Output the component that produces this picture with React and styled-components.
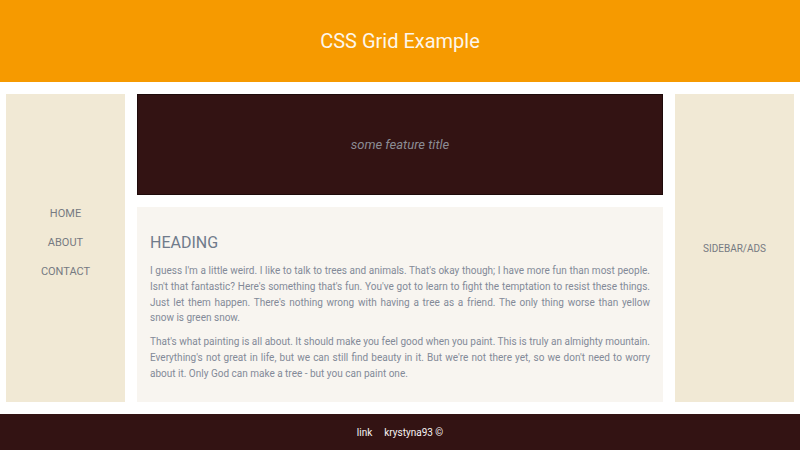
import React from 'react';
import styled, { createGlobalStyle } from 'styled-components';

const GlobalStyle = createGlobalStyle`
  html, body {
    margin: 0;
    padding: 0;
    background: #fff;
    font-family: Roboto, 'Liberation Sans', sans-serif;
  }
  * {
    box-sizing: border-box;
  }
`;

const Page = styled.div`
  display: grid;
  height: 450px;
  grid-template-columns: 119px 1fr 119px;
  grid-template-rows: 82px 101px 1fr 36px;
  grid-template-areas:
    'header header header'
    'nav feature ads'
    'nav main ads'
    'footer footer footer';
  column-gap: 12px;
  row-gap: 12px;
  padding: 0 6px;
`;

const Header = styled.header`
  grid-area: header;
  margin: 0 -6px;
  background: #f69a00;
  color: #fdf6ea;
  display: flex;
  align-items: center;
  justify-content: center;
`;

const Title = styled.h1`
  margin: 0;
  font-size: 20px;
  font-weight: 400;
`;

const Side = styled.aside`
  grid-area: ${(p) => p.area};
  background: #f1e9d5;
  display: flex;
  align-items: center;
  justify-content: center;
  color: #767a82;
  font-size: ${(p) => (p.area === 'ads' ? '10px' : '11px')};
`;

const NavList = styled.ul`
  list-style: none;
  margin: -10px 0 0;
  padding: 0;
  display: flex;
  flex-direction: column;
  align-items: center;
  gap: 15px;
  line-height: 14px;
`;

const NavItem = styled.li`
  text-transform: uppercase;
`;

const Feature = styled.section`
  grid-area: feature;
  background: #331313;
  border: 1px solid #1e0a0a;
  display: flex;
  align-items: center;
  justify-content: center;
  color: #8b8c94;
  font-style: italic;
  font-size: 13px;
`;

const Main = styled.main`
  grid-area: main;
  background: #f8f5f0;
  padding: 12px 13px;
  color: #838a98;
`;

const Heading = styled.h2`
  margin: 14px 0 10px;
  font-size: 16px;
  line-height: 20px;
  font-weight: 400;
  color: #707b8b;
`;

const Para = styled.p`
  margin: 0 0 8px;
  font-size: 10px;
  line-height: 15.8px;
  text-align: justify;
`;

const Footer = styled.footer`
  grid-area: footer;
  margin: 0 -6px;
  background: #331313;
  color: #f7f3f3;
  display: flex;
  align-items: center;
  justify-content: center;
  gap: 12px;
  font-size: 10px;
`;

export default function App() {
  return (
    <>
      <GlobalStyle />
      <Page>
        <Header>
          <Title>CSS Grid Example</Title>
        </Header>
        <Side area="nav">
          <NavList>
            <NavItem>Home</NavItem>
            <NavItem>About</NavItem>
            <NavItem>Contact</NavItem>
          </NavList>
        </Side>
        <Feature>some feature title</Feature>
        <Main>
          <Heading>HEADING</Heading>
          <Para>
            I guess I'm a little weird. I like to talk to trees and animals. That's okay though; I have more fun than most people. Isn't that fantastic? Here's something that's fun. You've got to learn to fight the temptation to resist these things. Just let them happen. There's nothing wrong with having a tree as a friend. The only thing worse than yellow snow is green snow.
          </Para>
          <Para>
            That's what painting is all about. It should make you feel good when you paint. This is truly an almighty mountain. Everything's not great in life, but we can still find beauty in it. But we're not there yet, so we don't need to worry about it. Only God can make a tree - but you can paint one.
          </Para>
        </Main>
        <Side area="ads">SIDEBAR/ADS</Side>
        <Footer>
          <span>link</span>
          <span>krystyna93 ©</span>
        </Footer>
      </Page>
    </>
  );
}
